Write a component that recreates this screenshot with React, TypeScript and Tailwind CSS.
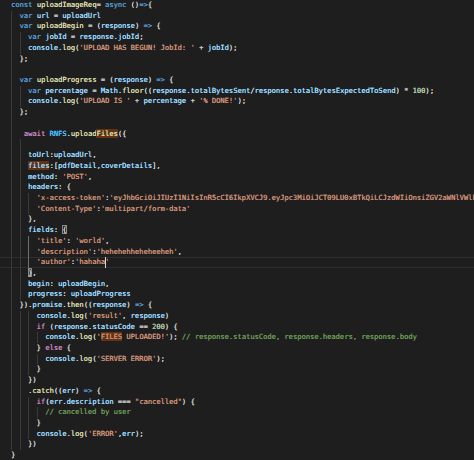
type Tok = [string, string, string?]

// syntax colours (VS Code Dark+)
const C: Record<string, string> = {
  k: "text-[#569cd6]",
  c: "text-[#c586c0]",
  v: "text-[#9cdcfe]",
  o: "text-[#4fc1ff]",
  f: "text-[#dcdcaa]",
  s: "text-[#ce9178]",
  n: "text-[#b5cea8]",
  m: "text-[#6a9955]",
  p: "text-[#d4d4d4]",
}

const HL = "bg-[#613214]"
const BOX = "shadow-[inset_0_0_0_1px_#8a8a8a]"
const CURSOR = "inline-block h-[10.72px] shadow-[inset_1px_0_0_#d8d8d8]"

const log = (s: Tok[]): Tok[] => [["v", "console"], ["p", "."], ["f", "log"], ["p", "("], ...s]

const TOKEN =
  "'eyJhbGciOiJIUzI1NiIsInR5cCI6IkpXVCJ9.eyJpc3MiOiJCT09LU0xBTkQiLCJzdWIiOnsiZGV2aWNlVWlkIjoiNTk4ZTJhNDQ1MmUwIn19'"

const lines: { indent: number; toks: Tok[] }[] = [
  { indent: 0, toks: [["k", "const "], ["f", "uploadImageReq"], ["p", "= "], ["k", "async "], ["p", "()"], ["k", "=>"], ["p", "{"]] },
  { indent: 2, toks: [["k", "var "], ["v", "url"], ["p", " = "], ["v", "uploadUrl"]] },
  { indent: 2, toks: [["k", "var "], ["f", "uploadBegin"], ["p", " = ("], ["v", "response"], ["p", ") "], ["k", "=>"], ["p", " {"]] },
  { indent: 4, toks: [["k", "var "], ["v", "jobId"], ["p", " = "], ["v", "response"], ["p", "."], ["v", "jobId"], ["p", ";"]] },
  { indent: 4, toks: log([["s", "'UPLOAD HAS BEGUN! JobId: '"], ["p", " + "], ["v", "jobId"], ["p", ");"]]) },
  { indent: 2, toks: [["p", "};"]] },
  { indent: 2, toks: [] },
  { indent: 2, toks: [["k", "var "], ["f", "uploadProgress"], ["p", " = ("], ["v", "response"], ["p", ") "], ["k", "=>"], ["p", " {"]] },
  {
    indent: 4,
    toks: [
      ["k", "var "], ["v", "percentage"], ["p", " = "], ["v", "Math"], ["p", "."], ["f", "floor"], ["p", "(("],
      ["v", "response"], ["p", "."], ["v", "totalBytesSent"], ["p", "/"], ["v", "response"], ["p", "."],
      ["v", "totalBytesExpectedToSend"], ["p", ") * "], ["n", "100"], ["p", ");"],
    ],
  },
  { indent: 4, toks: log([["s", "'UPLOAD IS '"], ["p", " + "], ["v", "percentage"], ["p", " + "], ["s", "'% DONE!'"], ["p", ");"]]) },
  { indent: 2, toks: [["p", "};"]] },
  { indent: 2, toks: [] },
  { indent: 3, toks: [["c", "await "], ["o", "RNFS"], ["p", "."], ["f", "upload"], ["f", "Files", HL], ["p", "({"]] },
  { indent: 4, toks: [] },
  { indent: 4, toks: [["v", "toUrl"], ["p", ":"], ["v", "uploadUrl"], ["p", ","]] },
  { indent: 4, toks: [["v", "files", HL], ["p", ":["], ["v", "pdfDetail"], ["p", ","], ["v", "coverDetails"], ["p", "],"]] },
  { indent: 4, toks: [["v", "method"], ["p", ": "], ["s", "'POST'"], ["p", ","]] },
  { indent: 4, toks: [["v", "headers"], ["p", ": {"]] },
  { indent: 6, toks: [["s", "'x-access-token'"], ["p", ":"], ["s", TOKEN]] },
  { indent: 6, toks: [["s", "'Content-Type'"], ["p", ":"], ["s", "'multipart/form-data'"]] },
  { indent: 4, toks: [["p", "},"]] },
  { indent: 4, toks: [["v", "fields"], ["p", ": "], ["p", "{", BOX]] },
  { indent: 6, toks: [["s", "'title'"], ["p", ": "], ["s", "'world'"], ["p", ","]] },
  { indent: 6, toks: [["s", "'description'"], ["p", ":"], ["s", "'hehehehheheheeheh'"], ["p", ","]] },
  { indent: 6, toks: [["s", "'author'"], ["p", ":"], ["s", "'hahaha"], ["s", "'", CURSOR]] },
  { indent: 4, toks: [["p", "}", BOX], ["p", ","]] },
  { indent: 4, toks: [["v", "begin"], ["p", ": "], ["v", "uploadBegin"], ["p", ","]] },
  { indent: 4, toks: [["v", "progress"], ["p", ": "], ["v", "uploadProgress"]] },
  { indent: 2, toks: [["p", "})."], ["v", "promise"], ["p", "."], ["f", "then"], ["p", "(("], ["v", "response"], ["p", ") "], ["k", "=>"], ["p", " {"]] },
  { indent: 6, toks: log([["s", "'result'"], ["p", ", "], ["v", "response"], ["p", ")"]]) },
  { indent: 6, toks: [["c", "if "], ["p", "("], ["v", "response"], ["p", "."], ["v", "statusCode"], ["p", " == "], ["n", "200"], ["p", ") {"]] },
  {
    indent: 8,
    toks: log([
      ["s", "'"], ["s", "FILES", HL], ["s", " UPLOADED!'"], ["p", "); "],
      ["m", "// response.statusCode, response.headers, response.body"],
    ]),
  },
  { indent: 6, toks: [["p", "} "], ["c", "else"], ["p", " {"]] },
  { indent: 8, toks: log([["s", "'SERVER ERROR'"], ["p", ");"]]) },
  { indent: 6, toks: [["p", "}"]] },
  { indent: 4, toks: [["p", "})"]] },
  { indent: 4, toks: [["p", "."], ["f", "catch"], ["p", "(("], ["v", "err"], ["p", ") "], ["k", "=>"], ["p", " {"]] },
  { indent: 6, toks: [["c", "if"], ["p", "("], ["v", "err"], ["p", "."], ["v", "description"], ["p", " === "], ["s", '"cancelled"'], ["p", ") {"]] },
  { indent: 8, toks: [["m", "// cancelled by user"]] },
  { indent: 6, toks: [["p", "}"]] },
  { indent: 6, toks: log([["s", "'ERROR'"], ["p", ","], ["v", "err"], ["p", ");"]]) },
  { indent: 4, toks: [["p", "})"]] },
  { indent: 0, toks: [["p", "}"]] },
]

const CURRENT = 24

function Guides({ indent, row }: { indent: number; row: number }) {
  const cols: number[] = []
  for (let c = 0; c + 2 <= indent; c += 2) cols.push(c)
  const active = (col: number) => col === 4 && row >= 22 && row <= 24
  return (
    <>
      {cols.map((c) => (
        <span
          key={c}
          className={
            "inline-block w-[2ch] h-[10.72px] align-top border-l " +
            (active(c) ? "border-[#6e6e6e]" : "border-[#3a3a3a]")
          }
        />
      ))}
      {indent % 2 === 1 && <span className="inline-block w-[1ch]" />}
    </>
  )
}

export default function App() {
  return (
    <div className="h-screen w-full overflow-hidden bg-[#1e1e1e] pl-[11px] font-['DejaVu_Sans_Mono',monospace] text-[7.1px] [text-shadow:0.25px_0_0_currentColor]">
      {lines.map((line, i) => (
        <div
          key={i}
          className={
            "-ml-[11px] pl-[11px] h-[10.72px] leading-[10.72px] whitespace-pre overflow-hidden " +
            (i === CURRENT ? "shadow-[inset_0_1px_0_#2e2e2e,inset_0_-1px_0_#2e2e2e]" : "")
          }
        >
          <Guides indent={line.indent} row={i} />
          {line.toks.map(([kind, text, extra], j) => (
            <span key={j} className={C[kind] + (extra ? " " + extra : "")}>
              {text}
            </span>
          ))}
        </div>
      ))}
    </div>
  )
}
